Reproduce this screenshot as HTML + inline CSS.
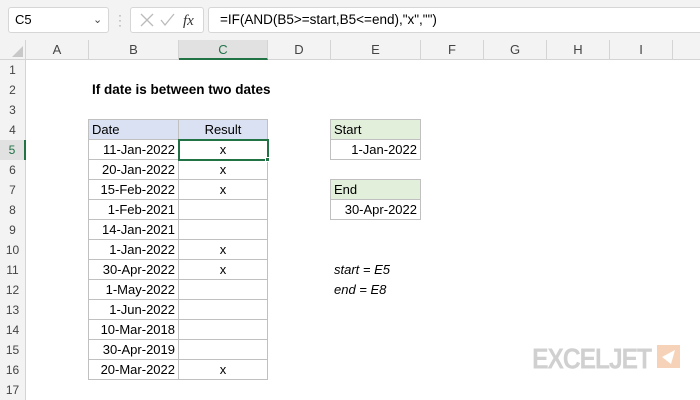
<!DOCTYPE html>
<html><head><style>
*{box-sizing:border-box;margin:0;padding:0}
body{width:700px;height:400px;overflow:hidden;background:#fff;font-family:"Liberation Sans",Arial,sans-serif;font-size:13px;color:#000;position:relative}
.a{position:absolute}
.top{left:0;top:0;width:700px;height:40px;background:#f3f3f3}
.box{background:#fff;border:1px solid #d6d6d6;border-radius:3px}
.ch{top:40px;height:20px;background:#f3f3f3;border-right:1px solid #d4d4d4;border-bottom:1px solid #d4d4d4;text-align:center;line-height:20px;color:#444;font-size:13px}
.rh{left:0;width:26px;height:20px;background:#f3f3f3;border-right:1px solid #d4d4d4;text-align:center;line-height:20px;color:#444;font-size:12px}
.c{height:21px;line-height:20px;border:1px solid #c0c0c0;padding:0 3px;background:#fff}
.r{text-align:right}.m{text-align:center}
</style></head><body>
<div class="a top"></div>
<div class="a box" style="left:8px;top:7px;width:101px;height:26px;line-height:24px;padding-left:6px">C5<span class="a" style="left:84px;top:0;font-size:11px;color:#444">&#8964;</span></div>
<div class="a" style="left:118px;top:13px;color:#999;font-size:12px;line-height:5px">·<br>·<br>·</div>
<div class="a box" style="left:130px;top:7px;width:74px;height:26px"></div>
<svg class="a" style="left:138px;top:12px" width="60" height="16"><path d="M3 2l12 12M15 2L3 14" stroke="#bbb" stroke-width="1.3" fill="none"/><path d="M23 8l4 5 9-11" stroke="#bbb" stroke-width="1.3" fill="none"/><text x="45" y="13" font-family="Liberation Serif" font-style="italic" font-size="15" fill="#333">fx</text></svg>
<div class="a box" style="left:208px;top:7px;width:500px;height:26px;line-height:24px;padding-left:11px;font-size:13.5px">=IF(AND(B5&gt;=start,B5&lt;=end),"x","")</div>

<div class="a ch" style="left:0;width:26px"></div>
<svg class="a" style="left:10px;top:46px" width="14" height="12"><path d="M13 0V11H2z" fill="#c8c8c8"/></svg>
<div class="a ch" style="left:26px;width:63px">A</div>
<div class="a ch" style="left:89px;width:90px">B</div>
<div class="a ch" style="left:179px;width:89px;background:#e1e1e1;border-bottom:2px solid #217346;color:#217346">C</div>
<div class="a ch" style="left:268px;width:63px">D</div>
<div class="a ch" style="left:331px;width:90px">E</div>
<div class="a ch" style="left:421px;width:63px">F</div>
<div class="a ch" style="left:484px;width:63px">G</div>
<div class="a ch" style="left:547px;width:63px">H</div>
<div class="a ch" style="left:610px;width:63px">I</div>
<div class="a ch" style="left:673px;width:40px"></div>

<div class="a rh" style="top:60px">1</div><div class="a rh" style="top:80px">2</div><div class="a rh" style="top:100px">3</div><div class="a rh" style="top:120px">4</div>
<div class="a rh" style="top:140px;background:#e1e1e1;border-right:2px solid #217346;color:#217346">5</div>
<div class="a rh" style="top:160px">6</div><div class="a rh" style="top:180px">7</div><div class="a rh" style="top:200px">8</div><div class="a rh" style="top:220px">9</div><div class="a rh" style="top:240px">10</div><div class="a rh" style="top:260px">11</div><div class="a rh" style="top:280px">12</div><div class="a rh" style="top:300px">13</div><div class="a rh" style="top:320px">14</div><div class="a rh" style="top:340px">15</div><div class="a rh" style="top:360px">16</div><div class="a rh" style="top:380px">17</div>

<div class="a" style="left:92px;top:80px;line-height:20px;font-weight:bold;font-size:13.5px">If date is between two dates</div>

<div class="a c" style="left:88px;top:119px;width:91px;background:#d9e1f2">Date</div>
<div class="a c m" style="left:178px;top:119px;width:90px;background:#d9e1f2">Result</div>
<div class="a c r" style="left:88px;top:139px;width:91px">11-Jan-2022</div><div class="a c m" style="left:178px;top:139px;width:90px">x</div>
<div class="a c r" style="left:88px;top:159px;width:91px">20-Jan-2022</div><div class="a c m" style="left:178px;top:159px;width:90px">x</div>
<div class="a c r" style="left:88px;top:179px;width:91px">15-Feb-2022</div><div class="a c m" style="left:178px;top:179px;width:90px">x</div>
<div class="a c r" style="left:88px;top:199px;width:91px">1-Feb-2021</div><div class="a c m" style="left:178px;top:199px;width:90px"></div>
<div class="a c r" style="left:88px;top:219px;width:91px">14-Jan-2021</div><div class="a c m" style="left:178px;top:219px;width:90px"></div>
<div class="a c r" style="left:88px;top:239px;width:91px">1-Jan-2022</div><div class="a c m" style="left:178px;top:239px;width:90px">x</div>
<div class="a c r" style="left:88px;top:259px;width:91px">30-Apr-2022</div><div class="a c m" style="left:178px;top:259px;width:90px">x</div>
<div class="a c r" style="left:88px;top:279px;width:91px">1-May-2022</div><div class="a c m" style="left:178px;top:279px;width:90px"></div>
<div class="a c r" style="left:88px;top:299px;width:91px">1-Jun-2022</div><div class="a c m" style="left:178px;top:299px;width:90px"></div>
<div class="a c r" style="left:88px;top:319px;width:91px">10-Mar-2018</div><div class="a c m" style="left:178px;top:319px;width:90px"></div>
<div class="a c r" style="left:88px;top:339px;width:91px">30-Apr-2019</div><div class="a c m" style="left:178px;top:339px;width:90px"></div>
<div class="a c r" style="left:88px;top:359px;width:91px">20-Mar-2022</div><div class="a c m" style="left:178px;top:359px;width:90px">x</div>
<div class="a" style="left:178px;top:139px;width:91px;height:22px;border:2px solid #217346"></div>
<div class="a" style="left:265px;top:157px;width:5px;height:5px;background:#217346;border:1px solid #fff"></div>

<div class="a c" style="left:330px;top:119px;width:91px;background:#e2efda">Start</div>
<div class="a c r" style="left:330px;top:139px;width:91px">1-Jan-2022</div>
<div class="a c" style="left:330px;top:179px;width:91px;background:#e2efda">End</div>
<div class="a c r" style="left:330px;top:199px;width:91px">30-Apr-2022</div>

<div class="a" style="left:334px;top:260px;line-height:20px;font-style:italic">start = E5</div>
<div class="a" style="left:334px;top:280px;line-height:20px;font-style:italic">end = E8</div>

<div class="a" style="left:532px;top:342px;font-size:25px;font-weight:bold;color:#d0d0d0;letter-spacing:-1.3px;line-height:30px;transform:scaleY(1.15);transform-origin:top left">EXCELJET</div>
<svg class="a" style="left:657px;top:345px" width="23" height="23"><rect width="23" height="23" fill="#f6d3b8"/><path d="M5 12L18 5 14 19z" fill="#fff"/></svg>
</body></html>
